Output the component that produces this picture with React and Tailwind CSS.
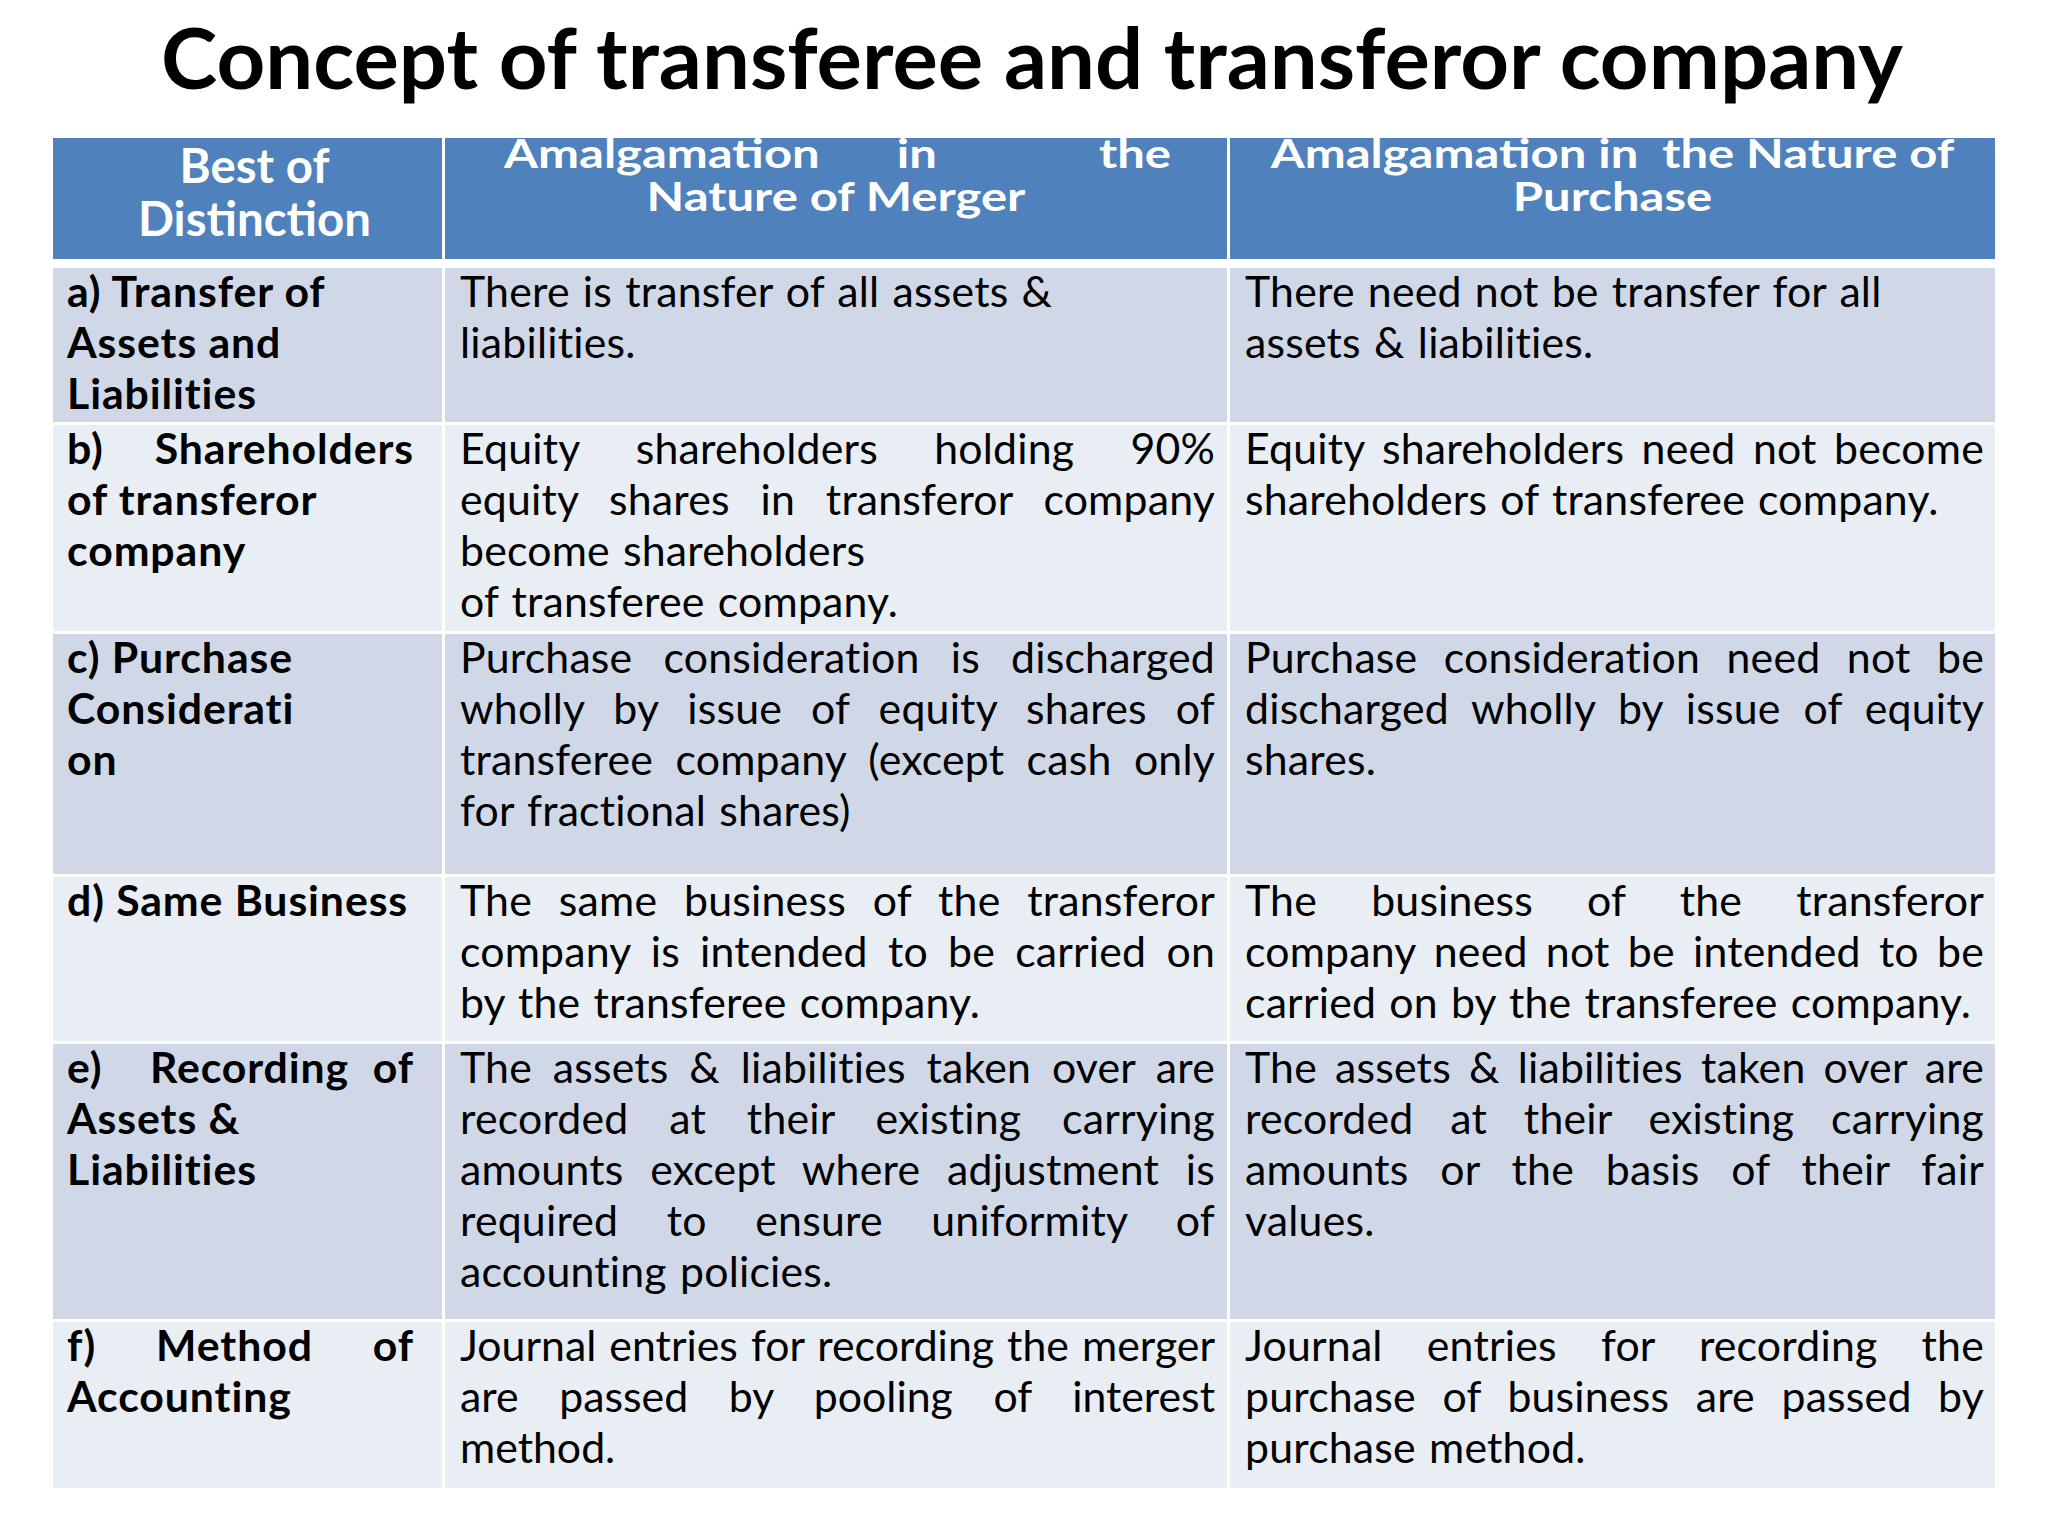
const rows = [
  {
    h: 'h-[154px]',
    bg: 'bg-[#d0d8e8]',
    head: <>a) Transfer of Assets and Liabilities</>,
    merger: <>There is transfer of all assets &amp;<br />liabilities.</>,
    purchase: <>There need not be transfer for all<br />assets &amp; liabilities.</>,
    plain: true,
  },
  {
    h: 'h-[206px]',
    bg: 'bg-[#e9edf4]',
    head: <>b)&nbsp; Shareholders of transferor<br />company</>,
    merger: <>Equity shareholders holding 90% equity shares in transferor company become shareholders<br />of transferee company.</>,
    purchase: <>Equity shareholders need not become shareholders of transferee company.</>,
  },
  {
    h: 'h-[240px]',
    bg: 'bg-[#d0d8e8]',
    head: <>c) Purchase<br />Considerati<br />on</>,
    headPlain: true,
    merger: <>Purchase consideration is discharged wholly by issue of equity shares of transferee company (except cash only for fractional shares)</>,
    purchase: <>Purchase consideration need not be discharged wholly by issue of equity shares.</>,
  },
  {
    h: 'h-[164px]',
    bg: 'bg-[#e9edf4]',
    head: <>d) Same Business</>,
    merger: <>The same business of the transferor company is intended to be carried on by the transferee company.</>,
    purchase: <>The business of the transferor company need not be intended to be carried on by the transferee company.</>,
  },
  {
    h: 'h-[275px]',
    bg: 'bg-[#d0d8e8]',
    head: <>e)&nbsp; Recording of Assets &amp;<br />Liabilities</>,
    merger: <>The assets &amp; liabilities taken over are recorded at their existing carrying amounts except where adjustment is required to ensure uniformity of accounting policies.</>,
    purchase: <>The assets &amp; liabilities taken over are recorded at their existing carrying amounts or the basis of their fair values.</>,
  },
  {
    h: 'h-[166px]',
    bg: 'bg-[#e9edf4]',
    head: <>f) Method of Accounting</>,
    merger: <>Journal entries for recording the merger are passed by pooling of interest method.</>,
    purchase: <>Journal entries for recording the purchase of business are passed by purchase method.</>,
    tightMerger: true,
  },
];

const loose = 'tracking-[0.2px] [word-spacing:2px]';
const tight = 'tracking-normal [word-spacing:0px]';

const App = () => {
  return (
    <div className="w-[2048px] h-[1536px] bg-white text-black font-['Lato',sans-serif] overflow-hidden">
      {/* title */}
      <div className="h-[138px] pt-[6px] pl-[16px] text-center text-[85px] leading-[100px] font-bold">
        Concept of transferee and transferor company
      </div>

      <div className="ml-[53px] w-[1942px] grid grid-cols-[389px_782px_765px] gap-x-[3px] gap-y-[3px]">
        {/* header */}
        <div className="h-[121px] mb-[6px] bg-[#4f81bd] text-white font-bold text-center text-[47.4px] leading-[53px] pl-[14px]">
          Best of<br />Distinction
        </div>
        <div className="h-[121px] mb-[6px] bg-[#4f81bd] text-white font-bold text-[49px] leading-[53px]">
          <div className="relative -top-[6px] scale-y-[0.81] origin-top whitespace-nowrap">
            <div className="pl-[59px] pr-[56px] flex">
              <span>Amalgamation</span>
              <span className="ml-[77px]">in</span>
              <span className="ml-auto">the</span>
            </div>
            <div className="text-center">Nature of Merger</div>
          </div>
        </div>
        <div className="h-[121px] mb-[6px] bg-[#4f81bd] text-white font-bold text-center text-[49px] leading-[53px]">
          <div className="relative -top-[6px] scale-y-[0.81] origin-top whitespace-nowrap">
            <div>Amalgamation in{'\u00a0'} the Nature of</div>
            <div>Purchase</div>
          </div>
        </div>

        {rows.map((r, i) => (
          <div key={i} className="contents">
            <div className={`${r.h} ${r.bg} pl-[14px] pr-[28px] font-bold text-[42.8px] tracking-[0.9px] leading-[51px] ${r.plain || r.headPlain ? 'text-left' : 'text-justify'}`}>
              <div className="-mt-[3px]">{r.head}</div>
            </div>
            <div className={`${r.h} ${r.bg} pl-[15px] pr-[12px] text-[42.8px] leading-[51px] ${r.tightMerger ? tight : loose} ${r.plain ? 'text-left' : 'text-justify'}`}>
              <div className="-mt-[3px]">{r.merger}</div>
            </div>
            <div className={`${r.h} ${r.bg} pl-[15px] pr-[11px] text-[42.8px] leading-[51px] ${loose} ${r.plain ? 'text-left' : 'text-justify'}`}>
              <div className="-mt-[3px]">{r.purchase}</div>
            </div>
          </div>
        ))}
      </div>
    </div>
  );
};

export default App;
